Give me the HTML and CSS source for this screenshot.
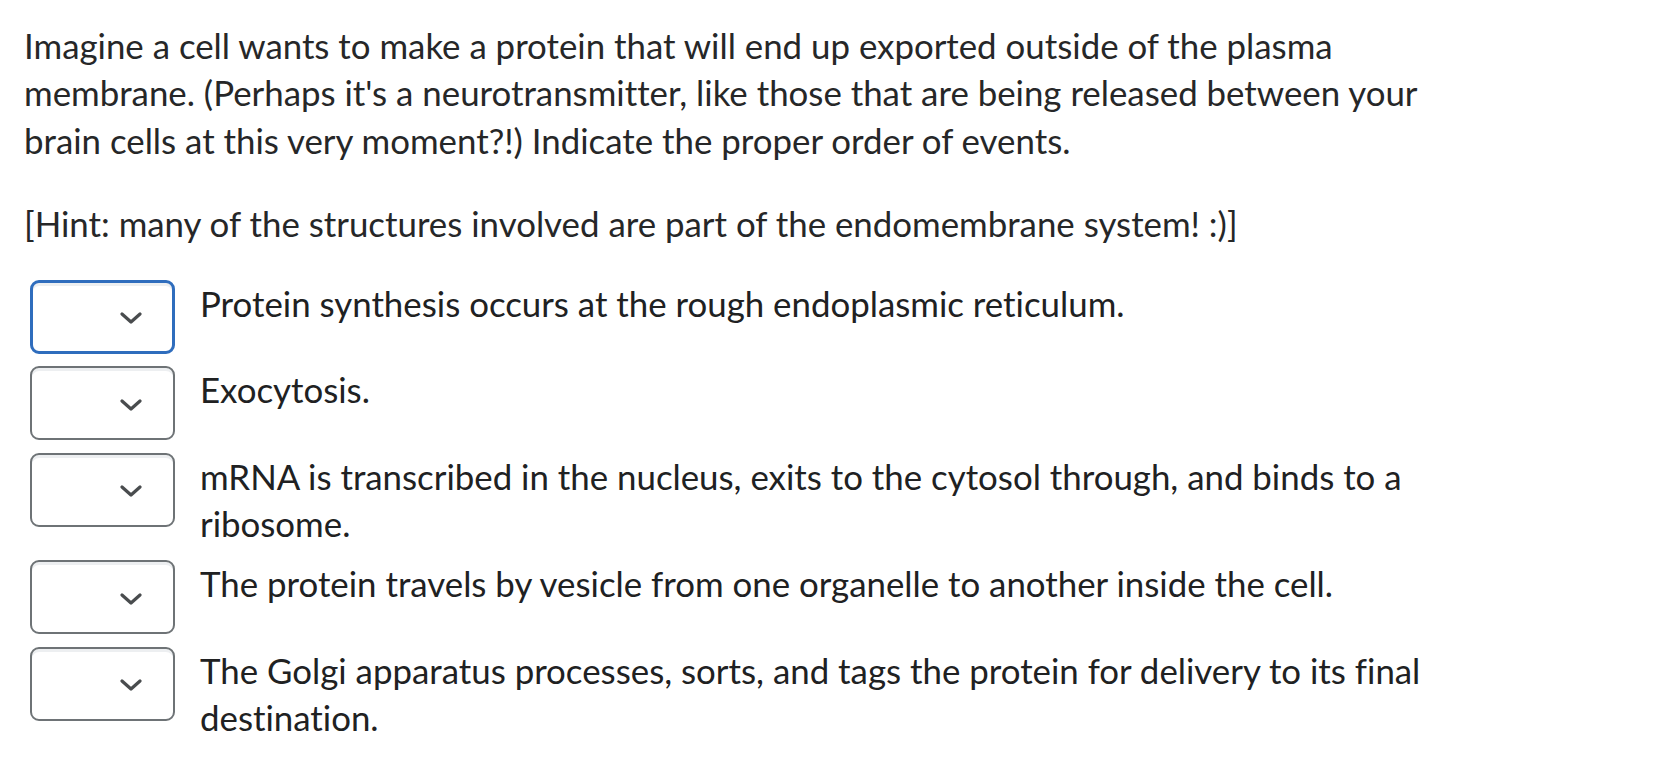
FILE: index.html
```html
<!DOCTYPE html>
<html lang="en">
<head>
<meta charset="utf-8">
<title>Question</title>
<link rel="stylesheet" href="styles.css">
</head>
<body>
<main class="question">
  <p class="prompt">Imagine a cell wants to make a protein that will end up exported outside of the plasma membrane. (Perhaps it's a neurotransmitter, like those that are being released between your brain cells at this very moment?!) Indicate the proper order of events.</p>
  <p class="prompt hint">[Hint: many of the structures involved are part of the endomembrane system! :)]</p>
  <ul class="order-list">
    <li class="order-row">
      <div class="select focused" role="combobox" aria-label="Order">
        <svg class="chev" width="22" height="12" viewBox="0 0 22 12"><polyline points="2,2 11,10 20,2" fill="none" stroke="#494c4e" stroke-width="3.2" stroke-linecap="round" stroke-linejoin="round"/></svg>
      </div>
      <span class="item-text">Protein synthesis occurs at the rough endoplasmic reticulum.</span>
    </li>
    <li class="order-row">
      <div class="select" role="combobox" aria-label="Order">
        <svg class="chev" width="22" height="12" viewBox="0 0 22 12"><polyline points="2,2 11,10 20,2" fill="none" stroke="#494c4e" stroke-width="3.2" stroke-linecap="round" stroke-linejoin="round"/></svg>
      </div>
      <span class="item-text">Exocytosis.</span>
    </li>
    <li class="order-row">
      <div class="select" role="combobox" aria-label="Order">
        <svg class="chev" width="22" height="12" viewBox="0 0 22 12"><polyline points="2,2 11,10 20,2" fill="none" stroke="#494c4e" stroke-width="3.2" stroke-linecap="round" stroke-linejoin="round"/></svg>
      </div>
      <span class="item-text">mRNA is transcribed in the nucleus, exits to the cytosol through, and binds to a ribosome.</span>
    </li>
    <li class="order-row">
      <div class="select" role="combobox" aria-label="Order">
        <svg class="chev" width="22" height="12" viewBox="0 0 22 12"><polyline points="2,2 11,10 20,2" fill="none" stroke="#494c4e" stroke-width="3.2" stroke-linecap="round" stroke-linejoin="round"/></svg>
      </div>
      <span class="item-text">The protein travels by vesicle from one organelle to another inside the cell.</span>
    </li>
    <li class="order-row">
      <div class="select" role="combobox" aria-label="Order">
        <svg class="chev" width="22" height="12" viewBox="0 0 22 12"><polyline points="2,2 11,10 20,2" fill="none" stroke="#494c4e" stroke-width="3.2" stroke-linecap="round" stroke-linejoin="round"/></svg>
      </div>
      <span class="item-text">The Golgi apparatus processes, sorts, and tags the protein for delivery to its final destination.</span>
    </li>
  </ul>
</main>
</body>
</html>
```

FILE: styles.css
```css
html, body {
  margin: 0;
  padding: 0;
  background: #ffffff;
}

body {
  font-family: Lato, "Noto Sans", "Liberation Sans", sans-serif;
  font-size: 34.85px;
  line-height: 47.5px;
  color: #202122;
  font-variant-ligatures: no-common-ligatures;
}

.question {
  width: 1424px;
  padding: 21.5px 0 0 24px;
}

.prompt {
  margin: 0 0 36px 0;
  color: #262728;
}

.hint {
  margin-bottom: 32px;
}

.order-list {
  list-style: none;
  margin: 0;
  padding: 0 0 0 6px;
  display: flex;
  flex-direction: column;
  gap: 12.5px;
}

.order-row {
  display: flex;
  align-items: flex-start;
  gap: 25px;
}

.select {
  flex: 0 0 auto;
  box-sizing: border-box;
  width: 145px;
  height: 74px;
  border: 2px solid #6e7376;
  border-radius: 9px;
  background: #ffffff;
  box-shadow: inset 0 3px 0 0 rgba(185, 192, 198, 0.25);
  display: flex;
  align-items: center;
  justify-content: flex-end;
  padding: 3px 31px 0 0;
}

.select.focused {
  border: 3px solid #2f6dbd;
  padding-right: 30px;
}

.chev {
  display: block;
}

.item-text {
  flex: 1 1 auto;
  min-width: 0;
}
```
